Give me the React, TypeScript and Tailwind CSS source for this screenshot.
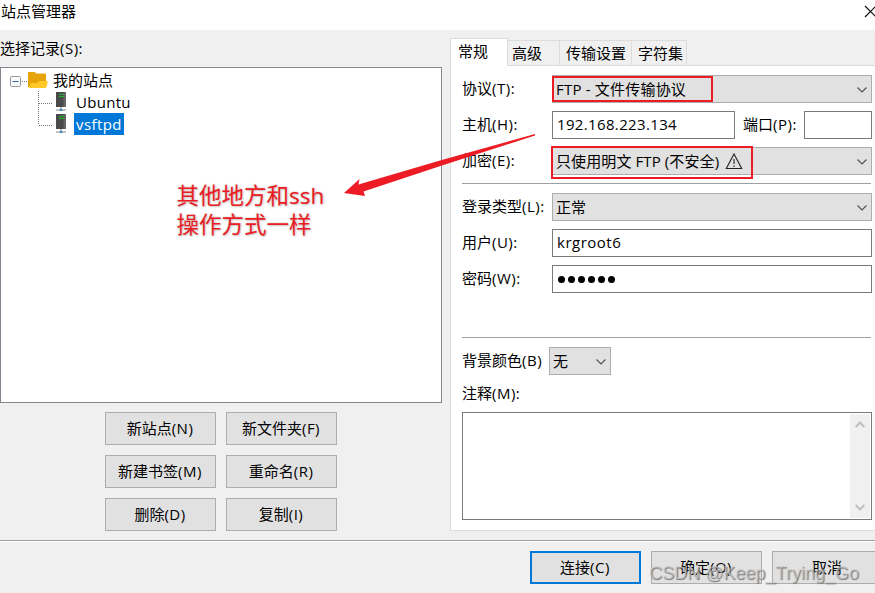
import React from "react";

const Chevron = () => (
  <svg width="12" height="8" viewBox="0 0 12 8" className="mt-px shrink-0" fill="none" stroke="#505050" strokeWidth="1.1">
    <path d="M1.5 1.5 6 6l4.5-4.5" />
  </svg>
);

const Server = () => (
  <svg width="14" height="20" viewBox="0 0 14 20" className="shrink-0">
    <rect x="2" y="0" width="10" height="15" fill="#4a4a4a" />
    <rect x="9.5" y="0" width="2.5" height="15" fill="#666" />
    <rect x="5" y="1.8" width="5" height="1" fill="#27b52c" />
    <rect x="5" y="4" width="5" height="1" fill="#27b52c" />
    <rect x="2" y="17.5" width="10" height="1" fill="#8b8b8b" />
    <rect x="6.5" y="15" width="1" height="3" fill="#777" />
    <rect x="5.5" y="17" width="3" height="2" rx="1" fill="#3b83cf" />
  </svg>
);

/* A dialog caption such as "Name(K):", with its access key spaced slightly wider. */
const Caption = ({ children }: { children: string }) => {
  const at = children.indexOf("(");
  return (
    <>
      {at < 0 ? children : children.slice(0, at)}
      {at >= 0 && <span className="tracking-[0.5px]">{children.slice(at)}</span>}
    </>
  );
};

const Button = ({ children, primary }: { children: string; primary?: boolean }) => (
  <button
    className={
      primary
        ? "flex h-[33px] w-[111px] shrink-0 justify-center border-2 border-[#0078d7] bg-[#e1e1e1] pt-[3px] pr-px whitespace-nowrap"
        : "flex h-[33px] w-[111px] shrink-0 justify-center border border-[#adadad] bg-[#e1e1e1] pt-1 pr-px whitespace-nowrap"
    }
  >
    <span><Caption>{children}</Caption></span>
  </button>
);

const Row = ({ label, children }: { label: string; children: React.ReactNode }) => (
  <div className="flex h-7 items-center">
    <span className="w-[90px] shrink-0 pb-[2px] whitespace-nowrap"><Caption>{label}</Caption></span>
    {children}
  </div>
);

const Combo = ({ children }: { children: React.ReactNode }) => (
  <div className="flex h-7 w-[320px] shrink-0 items-center justify-between border border-[#adadad] bg-[#e1e1e1] pr-[3px] pl-[3px]">
    <span className="flex items-center whitespace-nowrap">{children}</span>
    <Chevron />
  </div>
);

export default function App() {
  return (
    <div className="relative flex h-[593px] w-[875px] flex-col overflow-hidden bg-[#f0f0f0] font-['Open_Sans','Noto_Sans_CJK_SC',sans-serif] text-[15px] leading-[22px] text-black">
      <header className="flex h-[30px] shrink-0 justify-between bg-white pl-px">
        <h1>站点管理器</h1>
        <svg width="11" height="30" viewBox="0 0 11 30" fill="none" stroke="#111" strokeWidth="1.2">
          <path d="M1 6 12 17M12 6 1 17" />
        </svg>
      </header>

      <main className="flex h-[510px] shrink-0">
        <section className="w-[450px] shrink-0">
          <div className="h-[37px] pt-[7px]"><Caption>选择记录(S):</Caption></div>
          <div className="h-[336px] w-[442px] border border-[#828790] bg-white pt-px pl-[9px]">
            <div className="flex h-[22px] items-center">
              <svg width="38" height="20" viewBox="0 0 38 20" className="shrink-0">
                <rect x=".5" y="6.5" width="10" height="10" rx="1" fill="#fafafa" stroke="#999" />
                <path d="M2.5 11.5h6" stroke="#3a59a8" />
                <path d="M12 11.5h6" stroke="#777" strokeDasharray="1 1" />
                <path d="M18 3q0-1 1-1h6l1 1.5h9q1 0 1 1V17H18z" fill="#e6a30a" />
                <path d="M19 18l2-5h6l2-2h9l-1.5 6q-.2 1-1.5 1z" fill="#ffc928" />
              </svg>
              <span className="ml-[5px]">我的站点</span>
            </div>
            {["Ubuntu", "vsftpd"].map((name) => (
              <div key={name} className="flex h-[22px] items-center pl-7">
                <svg width="14" height="22" viewBox="0 0 14 22" className="shrink-0" stroke="#777" strokeDasharray="1 1">
                  <path d={name === "Ubuntu" ? "M.5 0v22M1 12.5h13" : "M.5 0v12M1 12.5h13"} />
                </svg>
                <span className="ml-[2px] flex"><Server /></span>
                <span
                  className={
                    name === "vsftpd"
                      ? "ml-[6px] flex h-[22px] w-[50px] items-center bg-[#0078d7] pl-[2px] tracking-[0.4px] text-white"
                      : "ml-[8px] tracking-[0.3px]"
                  }
                >
                  {name}
                </span>
              </div>
            ))}
          </div>
          <div className="mt-[9px] ml-[105px] grid w-[232px] grid-cols-2 gap-[10px]">
            <Button>新站点(N)</Button>
            <Button>新文件夹(F)</Button>
            <Button>新建书签(M)</Button>
            <Button>重命名(R)</Button>
            <Button>删除(D)</Button>
            <Button>复制(I)</Button>
          </div>
        </section>

        <section className="w-[425px] shrink-0 pt-2">
          <nav className="flex h-7 items-end">
            <div className="z-10 h-7 w-[58px] border border-b-0 border-[#dcdcdc] bg-white pt-px pl-[7px]">常规</div>
            <div className="h-[26px] w-[52px] border-t border-r border-b border-[#dcdcdc] pt-px pl-1">高级</div>
            <div className="h-[26px] w-[72px] border-t border-r border-b border-[#dcdcdc] pt-px pl-[6px]">传输设置</div>
            <div className="h-[26px] w-[55px] border-t border-r border-b border-[#dcdcdc] pt-px pl-[6px]">字符集</div>
            <div className="h-px flex-1 bg-[#dcdcdc]" />
          </nav>
          <div className="h-[465px] border-b border-l border-[#dcdcdc] bg-white pt-[9px] pl-[11px]">
            <div className="flex flex-col gap-2">
              <Row label="协议(T):">
                <Combo><span className="tracking-[0.2px]">FTP - 文件传输协议</span></Combo>
              </Row>
              <Row label="主机(H):">
                <div className="flex h-7 w-[183px] items-center border border-[#7a7a7a] pb-[2px] pl-1 tracking-[0.35px]">192.168.223.134</div>
                <span className="ml-2 w-[61px] pb-[2px] whitespace-nowrap"><Caption>端口(P):</Caption></span>
                <div className="h-7 w-[68px] border border-[#7a7a7a]" />
              </Row>
              <Row label="加密(E):">
                <Combo>
                  <span className="tracking-[0.1px]">只使用明文 FTP (不安全)</span>
                  <svg width="18" height="17" viewBox="0 0 18 17" className="ml-[6px]" fill="none" stroke="#222" strokeWidth="1.1">
                    <path d="M9 1 16.7 15.5H1.3zM9 6v5M9 12.5V14" />
                  </svg>
                </Combo>
              </Row>
            </div>
            <div className="mt-2 mb-[9px] h-px w-[409px] bg-[#a0a0a0]" />
            <div className="flex flex-col gap-2">
              <Row label="登录类型(L):">
                <Combo>正常</Combo>
              </Row>
              <Row label="用户(U):">
                <div className="flex h-7 w-[320px] items-center border border-[#7a7a7a] pb-[2px] pl-1 tracking-[0.5px]">krgroot6</div>
              </Row>
              <Row label="密码(W):">
                <div className="flex h-7 w-[320px] items-center gap-[3px] border border-[#7a7a7a] pl-[5px]">
                  {[0, 1, 2, 3, 4, 5].map((n) => (
                    <i key={n} className="size-[7px] rounded-full bg-black" />
                  ))}
                </div>
              </Row>
            </div>
            <div className="mt-11 mb-[9px] h-px w-[409px] bg-[#a0a0a0]" />
            <div className="flex h-7 items-center">
              <span className="w-[87px] pb-[2px] whitespace-nowrap"><Caption>背景颜色(B)</Caption></span>
              <div className="flex h-7 w-[62px] items-center justify-between border border-[#adadad] bg-[#e1e1e1] pr-[3px] pl-[3px]">
                无
                <Chevron />
              </div>
            </div>
            <div className="h-[37px] pt-[7px]"><Caption>注释(M):</Caption></div>
            <div className="flex h-[108px] w-[410px] justify-end border border-[#7a7a7a] p-px">
              <div className="flex w-5 flex-col items-center justify-between bg-[#f0f0f0] py-[6px]">
                <svg width="10" height="9" viewBox="0 0 10 9" fill="none" stroke="#bfbfbf" strokeWidth="2">
                  <path d="M.7 7 5 2.5 9.3 7" />
                </svg>
                <svg width="10" height="9" viewBox="0 0 10 9" fill="none" stroke="#bfbfbf" strokeWidth="2">
                  <path d="M.7 2 5 6.5 9.3 2" />
                </svg>
              </div>
            </div>
          </div>
        </section>
      </main>

      <footer className="flex h-[53px] shrink-0 gap-[10px] border-t border-[#a0a0a0] pt-[10px] pl-[530px] shadow-[inset_0_1px_0_#fff]">
        <Button primary>连接(C)</Button>
        <Button>确定(O)</Button>
        <Button>取消</Button>
      </footer>

      <div className="absolute top-[76px] left-[552px] h-[26px] w-[161px] border-2 border-[#ed1c24]" />
      <div className="absolute top-[146px] left-[551px] h-[33px] w-[202px] border-2 border-[#ed1c24]" />
      <svg className="absolute top-[130px] left-[340px]" width="200" height="70" viewBox="340 130 200 70">
        <path d="M535 134 440 160.5 358.5 184.5 359.5 179 344 193 365 196 363.5 191.5 442 165.5 535 135.5z" fill="#ed1c24" />
      </svg>
      <p className="absolute top-[181px] left-[176.5px] text-[22.5px] leading-[29px] whitespace-pre text-[#ed1c24] [text-shadow:0_0_2px_#bbb,1px_1px_2px_#ccc]">
        {"其他地方和ssh\n操作方式一样"}
      </p>
      <div className="absolute top-[562px] left-[649px] font-['Liberation_Sans',sans-serif] text-[18px] leading-[22px] whitespace-nowrap text-[#d0d0d0]/60 [text-shadow:1px_1px_1px_#777]">
        CSDN @Keep_Trying_Go
      </div>
    </div>
  );
}
